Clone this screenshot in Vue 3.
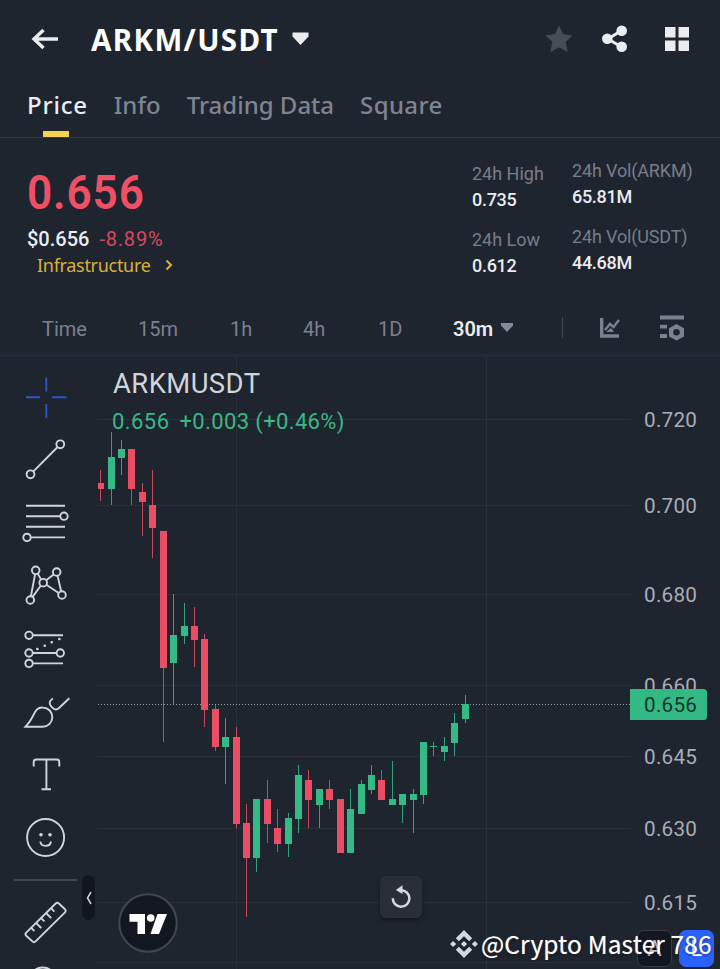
<template>
  <div class="screen">
    <header class="header">
      <svg class="back" width="28" height="22" viewBox="0 0 28 22">
        <path d="M27 11H3M12.500 2L3 11l9.500 9" fill="none" stroke="#eaecef" stroke-width="3.400" />
      </svg>
      <h1 class="pair">ARKM/USDT</h1>
      <svg class="caret" width="17" height="14" viewBox="0 0 17 14">
        <path d="M0.500 0.500h16v4L8.500 13L0.500 4.500z" fill="#eaecef" />
      </svg>
      <div class="actions">
        <svg width="28" height="28" viewBox="0 0 28 28">
          <path d="M14 1.500l3.700 8.200 9.100 1-6.700 6.200 2 9.300L14 21.800l-8.100 4.400 2-9.300-6.700-6.200 9.100-1z" fill="#474d57" stroke="#474d57" stroke-width="1" stroke-linejoin="round" />
        </svg>
        <svg width="28" height="28" viewBox="0 0 28 28">
          <path d="M20.500 5.500L7 14l13.500 8" fill="none" stroke="#eaecef" stroke-width="3" />
          <circle cx="20.700" cy="5.800" r="5.300" fill="#eaecef" />
          <circle cx="6.300" cy="13.700" r="5.300" fill="#eaecef" />
          <circle cx="20.700" cy="21.700" r="5.300" fill="#eaecef" />
        </svg>
        <svg width="24" height="24" viewBox="0 0 24 24">
          <path d="M0 0h10.500v10.500H0zM13.500 0H24v10.500H13.500zM0 13.500h10.500V24H0zM13.500 13.500H24V24H13.500z" fill="#eaecef" />
        </svg>
      </div>
    </header>

    <nav class="tabs">
      <span v-for="tab in tabs" :key="tab" class="tab" :class="{ active: tab === activeTab }" @click="activeTab = tab">{{ tab }}</span>
    </nav>

    <section class="summary">
      <div class="price-block">
        <div class="last-price">0.656</div>
        <div class="fiat">
          <span class="usd">$0.656</span>
          <span class="change">-8.89%</span>
        </div>
        <div class="category">
          <span>Infrastructure</span>
          <svg width="8" height="12" viewBox="0 0 8 12">
            <path d="M1.500 1.500L6 6l-4.500 4.500" fill="none" stroke="#d9b13b" stroke-width="2" />
          </svg>
        </div>
      </div>
      <div class="stats">
        <div v-for="stat in stats" :key="stat.label" class="stat">
          <div class="stat-label">{{ stat.label }}</div>
          <div class="stat-value">{{ stat.value }}</div>
        </div>
      </div>
    </section>

    <div class="intervals">
      <span v-for="item in intervals" :key="item" class="interval" :class="{ selected: item === '30m' }">
        {{ item }}
        <svg v-if="item === '30m'" width="12" height="10" viewBox="0 0 12 10">
          <path d="M0 0h12v2.500L6 9L0 2.500z" fill="#848b98" />
        </svg>
      </span>
      <i class="separator"></i>
      <svg width="20" height="20" viewBox="0 0 20 20">
        <path d="M1.700 0v18H19" fill="none" stroke="#7b818f" stroke-width="3.400" />
        <path d="M5 12l5-6 3.500 3L19 2" fill="none" stroke="#7b818f" stroke-width="2.400" />
        <path d="M6 14l5-4 3 4z" fill="#7b818f" />
      </svg>
      <svg width="26" height="26" viewBox="0 0 26 26">
        <path d="M0 2.500h24M0 11.700h7M0 21h7" stroke="#7b818f" stroke-width="3.800" />
        <path d="M16.500 9l7.500 4.200v8.200l-7.500 4.200L9 21.400v-8.200z" fill="#7b818f" />
        <circle cx="16.500" cy="17.300" r="3.300" fill="#1f252f" />
      </svg>
    </div>

    <main class="workspace">
      <aside class="toolbar">
        <!-- Crosshair -->
        <svg class="tool cross" viewBox="0 0 48 48">
          <path d="M24.300 4.500v14M24.300 31v14M4 24.300h14M30 24.300h14.500" />
        </svg>
        <!-- Trend line -->
        <svg class="tool" viewBox="0 0 48 48">
          <path d="M11.200 35.600L35.600 11" />
          <circle cx="38.300" cy="8.300" r="3.900" />
          <circle cx="8.500" cy="38.300" r="3.900" />
        </svg>
        <!-- Fib levels -->
        <svg class="tool" viewBox="0 0 48 48">
          <path d="M4 6.700h39M4 17.200h34M4 27.800h39M9 38.400h34" />
          <circle cx="42" cy="17.200" r="3.700" />
          <circle cx="5" cy="38.400" r="3.700" />
        </svg>
        <!-- Pattern -->
        <svg class="tool" viewBox="0 0 48 48">
          <path d="M13.100 12.200L8.900 34.100M15.700 11.600L19 17.400M24.100 18.300L31.700 12.400M35.600 13.800L39.100 29.200M10.600 34.900L18.700 23.800M24.300 22.800L36.700 31" />
          <circle v-for="p in patternPoints" :key="p[0]" :cx="p[0]" :cy="p[1]" r="3.800" />
        </svg>
        <!-- Forecast -->
        <svg class="tool" viewBox="0 0 48 48">
          <path d="M11 10.300h30M11 28h23.500M11 38.400h30" />
          <path d="M15.300 24h.1M22.700 20.700h.1M29.700 17.300h.1M37.300 14h.1" stroke-width="2.600" stroke-linecap="round" />
          <circle cx="7" cy="10.300" r="3.700" />
          <circle cx="7" cy="28" r="3.700" />
          <circle cx="38.300" cy="28" r="3.700" />
          <circle cx="7" cy="38.400" r="3.700" />
        </svg>
        <!-- Brush -->
        <svg class="tool" viewBox="0 0 48 48">
          <path d="M3.500 38.700H20.500A9.500 9.500 0 0 0 21 19.500C13.500 19 12.500 26 9 31.500C7 35 5 37 3.500 38.700z" />
          <path d="M31 10.500C27.500 12 26.700 15.500 29 18.300C31.500 21.700 34.500 22.500 37 20L47.300 10.300" />
        </svg>
        <!-- Text -->
        <svg class="tool" viewBox="0 0 48 48">
          <path d="M11.700 15.500V11Q11.700 8.500 14.200 8.500H34.800Q37.300 8.500 37.300 11V15.500M24.400 8.500V38.300M19.500 38.300h9.500" />
        </svg>
        <!-- Emoji -->
        <svg class="tool" viewBox="0 0 48 48">
          <circle cx="23.600" cy="23.500" r="18.500" />
          <path d="M18.300 27.500C19 33.300 28.200 33.300 29 27.500" />
          <circle class="dot" cx="19" cy="20.800" r="1.800" />
          <circle class="dot" cx="28" cy="20.800" r="1.800" />
        </svg>
        <div class="tool-divider"></div>
        <!-- Ruler -->
        <svg class="tool" viewBox="0 0 48 48">
          <path d="M33.700 5.500Q35.300 4 36.900 5.500L43 11.300Q44.500 12.800 43 14.300L13.600 43.400Q12 45 10.400 43.400L4.200 37.700Q2.700 36.200 4.200 34.700z" />
          <path d="M9 29.600l3.400 3.400M14 24.800l5.200 5.200M19 19.900l3.400 3.400M24 15l5.200 5.200M29 10.200l3.400 3.400" />
        </svg>
        <svg class="tool" viewBox="0 0 48 48">
          <circle cx="20.700" cy="21" r="13.500" />
        </svg>
      </aside>

      <section class="chart">
        <svg width="623" height="612" viewBox="97 357 623 612">
          <g stroke="#2a303a" stroke-width="1">
            <line v-for="y in gridRows" :key="y" x1="97" x2="631" :y1="y + 0.5" :y2="y + 0.5" />
            <line v-for="x in gridColumns" :key="x" :x1="x + 0.5" :x2="x + 0.5" y1="357" y2="969" />
          </g>
          <line x1="98" x2="630" y1="704.500" y2="704.500" stroke="#8fa3a0" stroke-width="1" stroke-dasharray="1 2" />
          <g v-for="(c, i) in candles" :key="i" :fill="c[5] ? '#35b985' : '#ea4d64'">
            <rect :x="c[0] + 3" :y="c[1]" width="1" :height="c[4] - c[1]" :opacity="0.85" />
            <rect :x="i === 0 ? 98 : c[0]" :y="c[2]" :width="i === 0 ? 6 : 7" :height="c[3] - c[2]" />
          </g>
          <text class="symbol" x="113" y="392.500" textLength="147">ARKMUSDT</text>
          <text class="quote" x="112" y="429" textLength="57">0.656</text>
          <text class="quote" x="179.500" y="429" textLength="165">+0.003 (+0.46%)</text>
          <text v-for="tick in priceTicks" :key="tick.label" class="tick" x="644" :y="tick.y" textLength="53">{{ tick.label }}</text>
          <path d="M630 689h73.500a3.500 3.500 0 0 1 3.500 3.500v24a3.500 3.500 0 0 1-3.500 3.500H630z" fill="#33ba84" />
          <text class="tick current" x="644" y="712" textLength="53">0.656</text>

          <circle cx="148" cy="923" r="28.700" fill="#131722" stroke="#42464f" stroke-width="2" />
          <g fill="#fff">
            <path d="M129.500 914H145v20h-7.500v-12.300h-8zM157.500 914H167l-8 20h-8.500z" />
            <circle cx="150.700" cy="918" r="3.800" />
          </g>
        </svg>

        <button class="collapse">
          <svg width="6" height="14" viewBox="0 0 6 14">
            <path d="M5 1L1.500 7L5 13" fill="none" stroke="#d1d4dc" stroke-width="1.500" />
          </svg>
        </button>
        <button class="reset">
          <svg width="24" height="24" viewBox="0 0 24 24">
            <path d="M3.800 13.200A8.300 8.300 0 1 0 12 5.200" fill="none" stroke="#d5d8e0" stroke-width="2.500" />
            <path d="M13.500 0.300V9L6.800 5z" fill="#d5d8e0" />
          </svg>
        </button>
        <div class="scale-modes">
          <button class="mode">A</button>
          <button class="mode log">L</button>
        </div>
        <div class="watermark">
          <svg width="28" height="28" viewBox="0 0 28 28" fill="#d3d7df">
            <path d="M14 0l8.200 8.200-3.100 3.100L14 6.200l-5.100 5.100-3.100-3.100zM14 28l8.200-8.200-3.100-3.100L14 21.800l-5.100-5.100-3.100 3.100zM14 10.900l3.100 3.100-3.100 3.100-3.100-3.100zM3.100 10.900L6.200 14l-3.100 3.100L0 14zM24.900 10.900L28 14l-3.100 3.100-3.100-3.100z" />
          </svg>
          <span>@Crypto Master 786</span>
        </div>
      </section>
    </main>
  </div>
</template>

<script setup>
import { ref } from 'vue';

const tabs = ['Price', 'Info', 'Trading Data', 'Square'];
const activeTab = ref('Price');

const stats = [
  { label: '24h High', value: '0.735' },
  { label: '24h Low', value: '0.612' },
  { label: '24h Vol(ARKM)', value: '65.81M' },
  { label: '24h Vol(USDT)', value: '44.68M' }
];

const intervals = ['Time', '15m', '1h', '4h', '1D', '30m'];

const patternPoints = [[13.7, 8.3], [34.7, 10], [21.2, 20.7], [8.3, 38], [40, 33]];

const gridRows = [419, 505, 594, 685, 756, 828, 902, 962];
const gridColumns = [236, 486];

const priceTicks = [
  { label: '0.720', y: 427 },
  { label: '0.700', y: 513 },
  { label: '0.680', y: 602 },
  { label: '0.660', y: 693 },
  { label: '0.645', y: 764 },
  { label: '0.630', y: 836 },
  { label: '0.615', y: 910 }
];

// [x, wick top, body top, body bottom, wick bottom, rising]
const candles = [
  [97, 470, 483, 489, 501, 0],
  [108, 432, 457, 489, 505, 1],
  [118, 440, 449, 458, 475, 1],
  [128, 449, 449, 489, 505, 0],
  [139, 483, 492, 502, 536, 0],
  [149, 470, 505, 528, 558, 0],
  [160, 531, 531, 668, 742, 0],
  [170, 594, 635, 663, 705, 1],
  [181, 603, 626, 636, 644, 1],
  [191, 607, 626, 640, 667, 0],
  [201, 634, 639, 710, 727, 0],
  [212, 705, 709, 747, 751, 0],
  [222, 718, 737, 747, 784, 1],
  [233, 727, 737, 824, 828, 0],
  [243, 804, 823, 858, 917, 0],
  [253, 799, 799, 858, 872, 1],
  [264, 780, 799, 824, 843, 0],
  [274, 809, 828, 844, 852, 0],
  [285, 813, 818, 844, 857, 1],
  [295, 765, 775, 819, 833, 1],
  [305, 770, 780, 800, 828, 0],
  [316, 789, 789, 805, 828, 1],
  [326, 780, 789, 800, 809, 0],
  [337, 799, 799, 853, 853, 0],
  [347, 789, 809, 853, 853, 1],
  [358, 780, 784, 814, 814, 1],
  [368, 765, 775, 790, 794, 1],
  [378, 770, 780, 800, 800, 0],
  [389, 761, 799, 805, 805, 1],
  [399, 794, 794, 805, 823, 1],
  [410, 789, 794, 800, 833, 1],
  [420, 742, 742, 795, 804, 1],
  [430, 742, 746, 747, 756, 1],
  [441, 737, 746, 752, 761, 1],
  [451, 713, 723, 743, 756, 1],
  [462, 695, 704, 719, 723, 1]
];
</script>

<style>
body {
  margin: 0;
  background: #1f252f;
}
</style>

<style scoped>
.screen {
  display: flex;
  flex-direction: column;
  width: 720px;
  height: 969px;
  overflow: hidden;
  background: #1f252f;
  color: #eaecef;
  font-family: Roboto, "Liberation Sans", sans-serif;
}

svg {
  display: block;
  flex: none;
}

button {
  display: flex;
  align-items: center;
  justify-content: center;
  padding: 0;
  border: 0;
  box-sizing: border-box;
}

.header {
  display: flex;
  align-items: center;
  height: 77px;
  padding: 0 31px;
}

.pair {
  margin: 3px 0 0 32px;
  width: 201px;
  font: 700 29.5px/40px "Noto Sans", sans-serif;
  letter-spacing: 1.35px;
  color: #fff;
}

.actions {
  display: flex;
  align-items: center;
  margin-left: auto;
}

.actions svg + svg {
  margin-left: 28px;
}

.actions svg:last-child {
  margin-left: 36px;
}

.tabs {
  display: flex;
  gap: 26px;
  height: 60px;
  padding-left: 27px;
  border-bottom: 1px solid #303640;
  font: 500 24px/56px "Noto Sans", sans-serif;
  color: #7e8492;
}

.tab {
  position: relative;
}

.tab:first-child {
  letter-spacing: 0.8px;
}

.tab:last-child {
  letter-spacing: 0.4px;
}

.active {
  color: #eaecef;
}

.active::after {
  content: '';
  position: absolute;
  left: 16px;
  bottom: 0;
  width: 26px;
  height: 6px;
  background: #f5d250;
}

.summary {
  display: flex;
  height: 162px;
}

.price-block {
  width: 445px;
  padding: 26px 0 0 27px;
}

.last-price {
  width: 140px;
  font-size: 49px;
  line-height: 58px;
  font-weight: 600;
  letter-spacing: 1px;
  color: #ee5065;
  transform: scaleX(0.9);
  transform-origin: left;
}

.fiat {
  display: flex;
  gap: 10px;
  margin-top: 4px;
  font-size: 20px;
  line-height: 26px;
}

.usd {
  font-weight: 500;
}

.change {
  color: #d8485e;
  letter-spacing: 0.8px;
}

.category {
  display: flex;
  align-items: center;
  gap: 14px;
  padding-left: 10px;
  font: 400 18px/26px "Noto Sans", sans-serif;
  letter-spacing: -0.3px;
  color: #d9b13b;
}

.stats {
  display: grid;
  grid-template-columns: 100px 140px;
  grid-template-rows: 66px 66px;
  grid-auto-flow: column;
  padding-top: 23px;
  font-size: 18px;
  line-height: 26px;
}

.stat:nth-child(n + 3) {
  margin-top: -3px;
  letter-spacing: -0.15px;
}

.stat-label {
  color: #777d8b;
  white-space: nowrap;
}

.stat-value {
  font-weight: 500;
  letter-spacing: -0.3px;
}

.intervals {
  display: grid;
  grid-template-columns: 96px 92px 73px 75px 75px 109px 38px 60px auto;
  align-items: center;
  height: 54px;
  padding-left: 42px;
  border-bottom: 3px solid #252b36;
  font-size: 20px;
  color: #7b818f;
}

.interval {
  display: flex;
  align-items: center;
  gap: 8px;
  padding-top: 4px;
}

.interval svg {
  margin-top: -3px;
}

.selected {
  font-weight: 600;
  color: #eaecef;
}

.separator {
  width: 1px;
  height: 21px;
  background: #414752;
}

.intervals > svg {
  margin-top: 1px;
}

.workspace {
  display: flex;
  flex: 1;
  min-height: 0;
}

.toolbar {
  display: flex;
  flex-direction: column;
  gap: 15px;
  width: 75px;
  padding: 16px 0 0 22px;
  overflow: hidden;
}

.tool {
  flex: none;
  width: 48px;
  height: 48px;
  fill: none;
  stroke: #d1d4dc;
  stroke-width: 1.9;
}

.tool:last-child {
  margin-top: -1px;
}

.cross {
  stroke: #2c55cc;
}

.dot {
  fill: #d1d4dc;
  stroke: none;
}

.tool-divider {
  flex: none;
  width: 63px;
  height: 2px;
  margin: 2px 0 2px -8px;
  background: #434852;
}

.chart {
  position: relative;
  flex: 1;
}

.symbol {
  font-size: 27.4px;
  fill: #d1d4dc;
}

.quote {
  font-size: 22px;
  fill: #3ab885;
}

.tick {
  font-size: 20.7px;
  fill: #a9adb8;
}

.current {
  fill: #12352f;
}

.collapse {
  position: absolute;
  left: -15px;
  top: 518px;
  width: 13px;
  height: 45px;
  border-radius: 7px;
  background: #12161f;
}

.reset {
  position: absolute;
  left: 283px;
  top: 519px;
  width: 42px;
  height: 42px;
  border-radius: 6px;
  background: #292e39;
  box-shadow: 0 2px 4px rgba(0, 0, 0, 0.4);
}

.scale-modes {
  position: absolute;
  right: 6px;
  bottom: 2px;
  display: flex;
  gap: 7px;
}

.mode {
  width: 35px;
  height: 37px;
  border: 1px solid #363b46;
  border-radius: 7px;
  background: #131722;
  color: #c4c8d1;
  font: 400 22px Roboto, sans-serif;
}

.log {
  border-color: #2962ff;
  background: #2962ff;
  color: #fff;
}

.watermark {
  position: absolute;
  left: 353px;
  bottom: 7px;
  display: flex;
  align-items: center;
  gap: 3px;
  font: 400 24.5px/36px "Noto Sans CJK SC", sans-serif;
  letter-spacing: 0.12px;
  color: #fff;
  white-space: nowrap;
  text-shadow: 0 0 1px rgba(255, 255, 255, 0.5), 0 1px 3px rgba(0, 0, 0, 0.6);
}
</style>
